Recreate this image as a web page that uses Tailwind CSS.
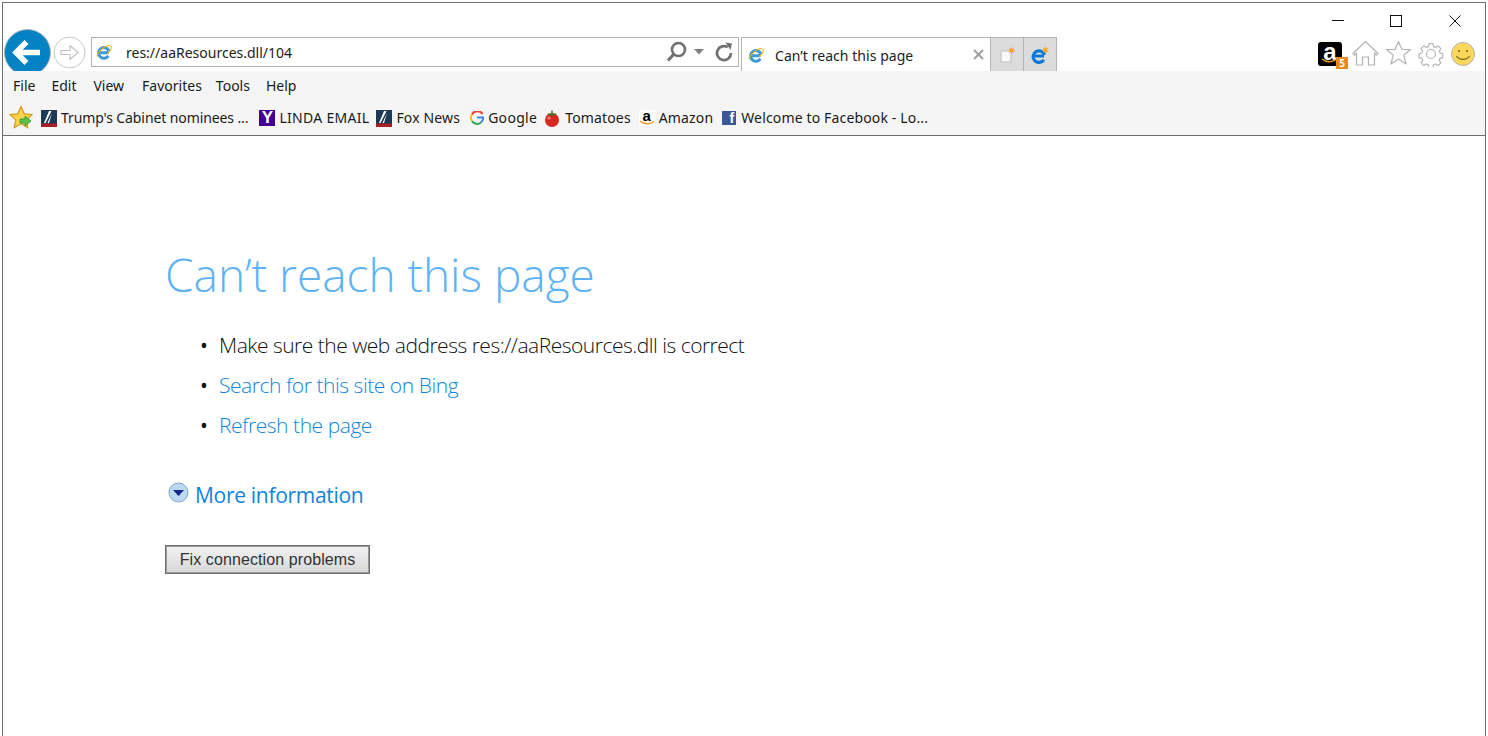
<!DOCTYPE html>
<html lang="en">
<head>
    <meta charset="UTF-8">
    <title>Can't reach this page</title>
    <script src="https://cdn.jsdelivr.net/npm/@tailwindcss/browser@4"></script>
</head>
<body class="bg-white">
<div class="w-[1488px] h-[736px] overflow-hidden pl-[2px] pt-[2px] pr-[2px] bg-white font-['Noto_Sans',sans-serif]">
    <div class="h-[800px] border-l border-t border-r border-[#6f6f6f] bg-white">

        <!-- Window controls -->
        <div class="h-[34px] relative">
            <svg class="absolute left-[1329px] top-[16px]" width="13" height="3" viewBox="0 0 13 3"><path d="M0 1.500h12" stroke="#111" stroke-width="1"/></svg>
            <svg class="absolute left-[1386px] top-[11px]" width="13" height="13" viewBox="0 0 13 13"><rect x="1.500" y="1.500" width="11" height="11" fill="none" stroke="#111" stroke-width="1"/></svg>
            <svg class="absolute left-[1445px] top-[11px]" width="14" height="14" viewBox="0 0 14 14"><path d="M1.500 1.500l11 11M12.500 1.500l-11 11" stroke="#111" stroke-width="1"/></svg>
        </div>

        <!-- Address row -->
        <div class="h-[34px] flex relative">
            <!-- back / forward -->
            <div class="w-[88px] shrink-0 relative">
                <svg class="absolute left-[1px] top-[-8px]" width="48" height="42" viewBox="0 0 48 42">
                    <circle cx="23.500" cy="23.500" r="23" fill="#0382c4" stroke="#a9b4ba" stroke-width="1"/>
                    <path d="M12 23.500h24M22.500 13L12 23.500 22.500 34" fill="none" stroke="#fff" stroke-width="5.500"/>
                </svg>
                <svg class="absolute left-[50px] top-[-1px]" width="33" height="33" viewBox="0 0 33 33">
                    <circle cx="16.500" cy="16.500" r="15.500" fill="#fff" stroke="#c6c6c6" stroke-width="1"/>
                    <path d="M8 14.500h9v-5l8 7-8 7v-5H8z" fill="#fff" stroke="#c2c2c2" stroke-width="1.200" stroke-linejoin="round"/>
                </svg>
            </div>
            <!-- address box -->
            <div class="w-[648px] h-[30px] shrink-0 border border-[#b4b4b4] flex items-center bg-white">
                <svg class="ml-[3px] shrink-0" width="18" height="18" viewBox="0 0 18 18">
                    <path d="M4 9.800h9.500M13.300 12.800A5.300 5.300 0 1 1 14 8.500" fill="none" stroke="#3d9bdc" stroke-width="3"/>
                    <ellipse cx="9" cy="9" rx="9" ry="3.600" transform="rotate(-42 9 9)" fill="none" stroke="#f0b400" stroke-width="1" stroke-dasharray="9 13 18 20"/>
                </svg>
                <span class="ml-[13px] mt-[1px] text-[14px] text-[#222] leading-none">res://aaResources.dll/104</span>
                <div class="ml-auto flex items-center pr-[4px]">
                    <svg width="22" height="22" viewBox="0 0 22 22">
                        <circle cx="12.500" cy="8.500" r="6.500" fill="none" stroke="#707070" stroke-width="2.600"/>
                        <path d="M8 13L2 19.500" stroke="#707070" stroke-width="3.200"/>
                    </svg>
                    <svg class="ml-[6px]" width="10" height="6" viewBox="0 0 10 6"><path d="M0 0h10L5 5.500z" fill="#808080"/></svg>
                    <svg class="ml-[10px]" width="20" height="20" viewBox="0 0 20 20">
                        <path d="M13.800 5.200A7 7 0 1 0 17 11" fill="none" stroke="#707070" stroke-width="2.700"/>
                        <path d="M11.500 0.500l6.500 1-1.500 6.500z" fill="#707070"/>
                    </svg>
                </div>
            </div>
            <!-- tab -->
            <div class="ml-[2px] w-[249px] shrink-0 h-[34px] border-l border-t border-[#b4b4b4] flex items-center bg-white">
                <svg class="ml-[5px] shrink-0" width="18" height="18" viewBox="0 0 18 18">
                    <path d="M4 9.800h9.500M13.300 12.800A5.300 5.300 0 1 1 14 8.500" fill="none" stroke="#3d9bdc" stroke-width="3"/>
                    <ellipse cx="9" cy="9" rx="9" ry="3.600" transform="rotate(-42 9 9)" fill="none" stroke="#f0b400" stroke-width="1" stroke-dasharray="9 13 18 20"/>
                </svg>
                <span class="ml-[10px] mt-[3px] text-[14px] tracking-[0.05px] text-[#222] leading-none whitespace-nowrap">Can’t reach this page</span>
                <svg class="ml-auto mr-[6px]" width="11" height="11" viewBox="0 0 11 11"><path d="M1 1l9 9M10 1l-9 9" stroke="#a0a0a0" stroke-width="2"/></svg>
            </div>
            <!-- new tab buttons -->
            <div class="w-[33px] shrink-0 h-[34px] bg-[#dcdcdc] border-l border-t border-[#b4b4b4] flex items-center justify-center">
                <svg width="18" height="18" viewBox="0 0 18 18">
                    <path d="M3 5h10v11H3z" fill="#f8f8f8" stroke="#bdbdbd" stroke-width="1"/>
                    <path d="M13.500 1.500v6M10.500 4.500h6M11.300 2.300l4.400 4.400M15.700 2.300l-4.400 4.400" stroke="#f5a623" stroke-width="1.100"/>
                </svg>
            </div>
            <div class="w-[34px] shrink-0 h-[34px] bg-[#dcdcdc] border-l border-t border-r border-[#b4b4b4] flex items-center justify-center">
                <svg width="20" height="18" viewBox="0 0 20 18">
                    <path d="M4 10h10M13.800 13.800A5.800 5.800 0 1 1 14.500 9" fill="none" stroke="#0a78d7" stroke-width="3.200"/>
                    <path d="M15.500 1v6M12.500 4h6M13.400 1.900l4.200 4.200M17.600 1.900l-4.200 4.200" stroke="#f5a623" stroke-width="1.200"/>
                </svg>
            </div>
            <!-- right tools -->
            <div class="absolute left-[1315px] top-[5px] flex items-start">
                <div class="relative w-[24px] h-[24px] bg-black rounded-[3px] flex justify-center">
                    <span class="font-['Liberation_Sans',sans-serif] font-bold text-white text-[24px] leading-[20px]">a</span>
                    <svg class="absolute left-[3px] top-[16px]" width="17" height="6" viewBox="0 0 17 6"><path d="M1 1c4 3.500 10 3.500 14 .5" fill="none" stroke="#f39a21" stroke-width="1.400"/></svg>
                    <div class="absolute left-[18px] top-[15px] w-[12px] h-[12px] bg-[#e68a1e] text-white text-[10px] font-bold leading-[12px] text-center">5</div>
                </div>
                <svg class="ml-[10px] -mt-[2px]" width="27" height="27" viewBox="0 0 27 27"><path d="M1 13.500L13.500 1.500 26 13.500l-1.500 1.500-2-2V25h-6v-8h-6v8h-6V13l-2 2z" fill="#fff" stroke="#b4b4b4" stroke-width="1.200" stroke-linejoin="round"/></svg>
                <svg class="ml-[6px] -mt-[2px]" width="27" height="27" viewBox="0 0 27 27"><path d="M13.500 1.500l3.400 8h8.600l-6.800 5.700 2.400 8.800-7.600-5-7.600 5 2.400-8.800L1.500 9.500h8.600z" fill="#fff" stroke="#b4b4b4" stroke-width="1.200" stroke-linejoin="round"/></svg>
                <svg class="ml-[6px] -mt-[1px]" width="26" height="26" viewBox="0 0 26 26">
                    <path d="M10.800 1.500h4.400l.7 3.300 2.200.9 2.800-1.800 3.100 3.100-1.800 2.800.9 2.200 3.300.7v0h-.4v4.400l-3 .7-.9 2.200 1.800 2.800-3.100 3.100-2.800-1.800-2.200.9-.7 3.300h-4.400l-.7-3.300-2.200-.9-2.800 1.800-3.100-3.100 1.800-2.800-.9-2.200-3-.7v-4.400l3-.7.9-2.200-1.800-2.800 3.100-3.100 2.800 1.800 2.200-.9z" transform="translate(1.300 1.300) scale(.9)" fill="#fff" stroke="#b4b4b4" stroke-width="1.300" stroke-linejoin="round"/>
                    <circle cx="13" cy="13" r="4.500" fill="#fff" stroke="#b4b4b4" stroke-width="1.200"/>
                </svg>
                <svg class="ml-[6px] -mt-[1px]" width="26" height="26" viewBox="0 0 26 26">
                    <circle cx="13" cy="13" r="11.500" fill="#fbd75b" stroke="#b3b3b3" stroke-width="1"/>
                    <circle cx="9" cy="10" r="1.100" fill="#7a6a20"/><circle cx="17" cy="10" r="1.100" fill="#7a6a20"/>
                    <path d="M6.500 15c2.500 4.500 10.500 4.500 13 0" fill="none" stroke="#7a6a20" stroke-width="1.200"/>
                </svg>
            </div>
        </div>

        <!-- Menu + favorites -->
        <div class="h-[65px] bg-[#f5f5f5] border-b border-[#6f6f6f] text-[14px] text-[#1a1a1a] leading-none">
            <div class="h-[30px] flex items-center pl-[10px]">
                <span>File</span><span class="ml-[16px]">Edit</span><span class="ml-[17px]">View</span><span class="ml-[18px]">Favorites</span><span class="ml-[14px]">Tools</span><span class="ml-[16px]">Help</span>
            </div>
            <div class="h-[34px] flex items-center pl-[6px] whitespace-nowrap tracking-[0.15px]">
                <svg width="26" height="26" viewBox="0 0 26 26">
                    <path d="M12 1.500l3.200 7.300 8 .8-6 5.300 1.700 7.900L12 18.800l-6.900 4 1.700-7.900-6-5.300 8-.8z" fill="#fcd34d" stroke="#d59a1f" stroke-width="1.200" stroke-linejoin="round"/>
                    <path d="M11 14h5v-3l6 5-6 5v-3h-5z" fill="#5ec34a" stroke="#2f8f2a" stroke-width=".8"/>
                </svg>
                <svg class="ml-[6px]" width="16" height="17" viewBox="0 0 16 17">
                    <rect width="16" height="17" fill="#1c3a56"/><rect y="13.500" width="16" height="3.500" fill="#a81e23"/>
                    <path d="M3 13L8 1h2.500L4.500 13zM6.500 13L11 3l-3 10z" fill="#fff"/>
                </svg>
                <span class="ml-[4px] tracking-[-0.1px]">Trump's Cabinet nominees ...</span>
                <div class="ml-[11px] w-[16px] h-[16px] bg-[#410093] text-white font-['Liberation_Sans',sans-serif] font-bold text-[17px] leading-[16px] text-center">Y</div>
                <span class="ml-[4px] tracking-[0.3px]">LINDA EMAIL</span>
                <svg class="ml-[7px]" width="16" height="17" viewBox="0 0 16 17">
                    <rect width="16" height="17" fill="#1c3a56"/><rect y="13.500" width="16" height="3.500" fill="#a81e23"/>
                    <path d="M3 13L8 1h2.500L4.500 13zM6.500 13L11 3l-3 10z" fill="#fff"/>
                </svg>
                <span class="ml-[4px]">Fox News</span>
                <svg class="ml-[10px]" width="14" height="14" viewBox="0 0 14 14">
                    <path d="M12.500 3A6 6 0 0 0 2 3.500" fill="none" stroke="#ea4335" stroke-width="2"/>
                    <path d="M2 3.500a6 6 0 0 0 0 6.500" fill="none" stroke="#fbbc05" stroke-width="2"/>
                    <path d="M2 10a6 6 0 0 0 9 1.500" fill="none" stroke="#34a853" stroke-width="2"/>
                    <path d="M11 11.500A6 6 0 0 0 13 6.500H7" fill="none" stroke="#4285f4" stroke-width="2"/>
                </svg>
                <span class="ml-[4px] tracking-[0.3px]">Google</span>
                <svg class="ml-[7px]" width="16" height="17" viewBox="0 0 16 17">
                    <circle cx="8" cy="10" r="7" fill="#d8281f"/>
                    <ellipse cx="5" cy="8" rx="2" ry="1.500" fill="#ef7a6c"/>
                    <path d="M8 .500v4M4 4l4 1 4-1" stroke="#3c7a2a" stroke-width="1.500" fill="none"/>
                </svg>
                <span class="ml-[5px]">Tomatoes</span>
                <div class="ml-[8px] w-[16px] h-[16px] bg-white relative flex justify-center">
                    <span class="font-['Liberation_Sans',sans-serif] font-bold text-black text-[15px] leading-[12px]">a</span>
                    <svg class="absolute left-0 top-[10px]" width="16" height="6" viewBox="0 0 16 6"><path d="M1 1c4 3.500 10 3.500 14 .5" fill="none" stroke="#f39a21" stroke-width="1.500"/></svg>
                </div>
                <span class="ml-[4px]">Amazon</span>
                <div class="ml-[9px] w-[14px] h-[14px] bg-[#3b5998] text-white font-['Liberation_Sans',sans-serif] font-bold text-[14px] leading-[15px] text-right pr-[2px]">f</div>
                <span class="ml-[5px]">Welcome to Facebook - Lo...</span>
            </div>
        </div>

        <!-- Error page -->
        <div class="pl-[162px] pt-[108px]">
            <h1 class="text-[46px] leading-[60px] font-light text-[#5db3f5] font-['Open_Sans',sans-serif]">Can’t reach this page</h1>
            <ul class="mt-[21px] pl-[35px] text-[21px] leading-[40px] font-light font-['Open_Sans',sans-serif] tracking-[-0.45px]">
                <li class="flex text-[#111]"><span class="w-[19px] shrink-0 font-normal">•</span><span class="tracking-[-0.5px]">Make sure the web address res://aaResources.dll is correct</span></li>
                <li class="flex text-[#111]"><span class="w-[19px] shrink-0 font-normal">•</span><span class="text-[#0f84dc]">Search for this site on Bing</span></li>
                <li class="flex text-[#111]"><span class="w-[19px] shrink-0 font-normal">•</span><span class="text-[#0f84dc]">Refresh the page</span></li>
            </ul>
            <div class="mt-[35px] flex items-center pl-[3px] h-[32px]">
                <svg class="-mt-[8px]" width="21" height="21" viewBox="0 0 21 21">
                    <circle cx="10.500" cy="10.500" r="9.500" fill="#bcd9f2" stroke="#7ea7cc" stroke-width="1"/>
                    <path d="M5 8h11l-5.500 6z" fill="#14288c"/>
                </svg>
                <span class="ml-[6px] text-[21px] text-[#0f84dc] font-['Open_Sans',sans-serif] tracking-[-0.3px]">More information</span>
            </div>
            <button class="mt-[33px] w-[205px] h-[29px] border border-[#707070] outline outline-[#9a9a9a] -outline-offset-2 bg-gradient-to-b from-[#f2f2f2] to-[#d8d8d8] font-['Liberation_Sans',sans-serif] text-[16px] tracking-[0.1px] text-[#333] leading-none">Fix connection problems</button>
        </div>
    </div>
</div>
</body>
</html>
